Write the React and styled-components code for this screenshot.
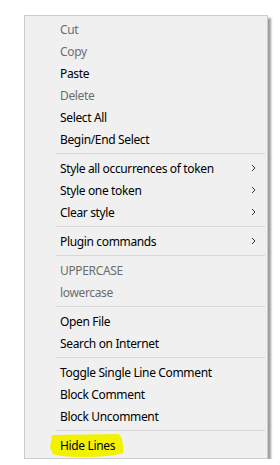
import React from "react";
import styled, { createGlobalStyle } from "styled-components";

const GlobalStyle = createGlobalStyle`
  body {
    margin: 0;
    background: #ffffff;
    font-family: "Noto Sans", "Liberation Sans", sans-serif;
  }
`;

const Page = styled.div`
  padding: 15px 0 0 24px;
`;

const Menu = styled.ul`
  width: 242px;
  margin: 0;
  padding: 2px 0;
  list-style: none;
  background: #f0f0f0;
  border: 1px solid #cccccc;
  box-shadow: 3px 3px 2px rgba(0, 0, 0, 0.38);
`;

const Item = styled.li`
  position: relative;
  display: flex;
  align-items: center;
  justify-content: space-between;
  height: 22px;
  padding: 0 11px 0 35px;
  font-size: 12px;
  letter-spacing: -0.35px;
  color: ${(p) => (p.disabled ? "#6d6d6d" : "#000000")};
  cursor: default;
`;

const Label = styled.span`
  position: relative;
  z-index: 1;
  white-space: nowrap;
`;

const Separator = styled.li`
  height: 7px;
  display: flex;
  align-items: center;
  padding: 0 2px 0 31px;
  &::after {
    content: "";
    flex: 1;
    height: 1px;
    background: #d7d7d7;
  }
`;

const Marker = styled.svg`
  position: absolute;
  left: 25px;
  top: -1px;
  width: 74px;
  height: 25px;
`;

const Chevron = () => (
  <svg width="5" height="8" viewBox="0 0 5 8">
    <polyline points="1,1 4,4 1,7" fill="none" stroke="#333" strokeWidth="1" />
  </svg>
);

const groups = [
  [
    { label: "Cut", disabled: true },
    { label: "Copy", disabled: true },
    { label: "Paste" },
    { label: "Delete", disabled: true },
    { label: "Select All" },
    { label: "Begin/End Select" },
  ],
  [
    { label: "Style all occurrences of token", sub: true },
    { label: "Style one token", sub: true },
    { label: "Clear style", sub: true },
  ],
  [{ label: "Plugin commands", sub: true }],
  [
    { label: "UPPERCASE", disabled: true },
    { label: "lowercase", disabled: true },
  ],
  [{ label: "Open File" }, { label: "Search on Internet" }],
  [
    { label: "Toggle Single Line Comment" },
    { label: "Block Comment" },
    { label: "Block Uncomment" },
  ],
  [{ label: "Hide Lines", marked: true }],
];

export default function App() {
  return (
    <Page>
      <GlobalStyle />
      <Menu>
        {groups.map((group, gi) => (
          <React.Fragment key={gi}>
            {gi > 0 && <Separator />}
            {group.map((item) => (
              <Item key={item.label} disabled={item.disabled}>
                {item.marked && (
                  <Marker viewBox="0 0 74 25">
                    <path
                      d="M2 2 L68 1 Q73 3 73.5 20 Q60 24 32 24 Q9 24 3 21 L0 15 Z"
                      fill="#f2f200"
                    />
                  </Marker>
                )}
                <Label>{item.label}</Label>
                {item.sub && <Chevron />}
              </Item>
            ))}
          </React.Fragment>
        ))}
      </Menu>
    </Page>
  );
}
